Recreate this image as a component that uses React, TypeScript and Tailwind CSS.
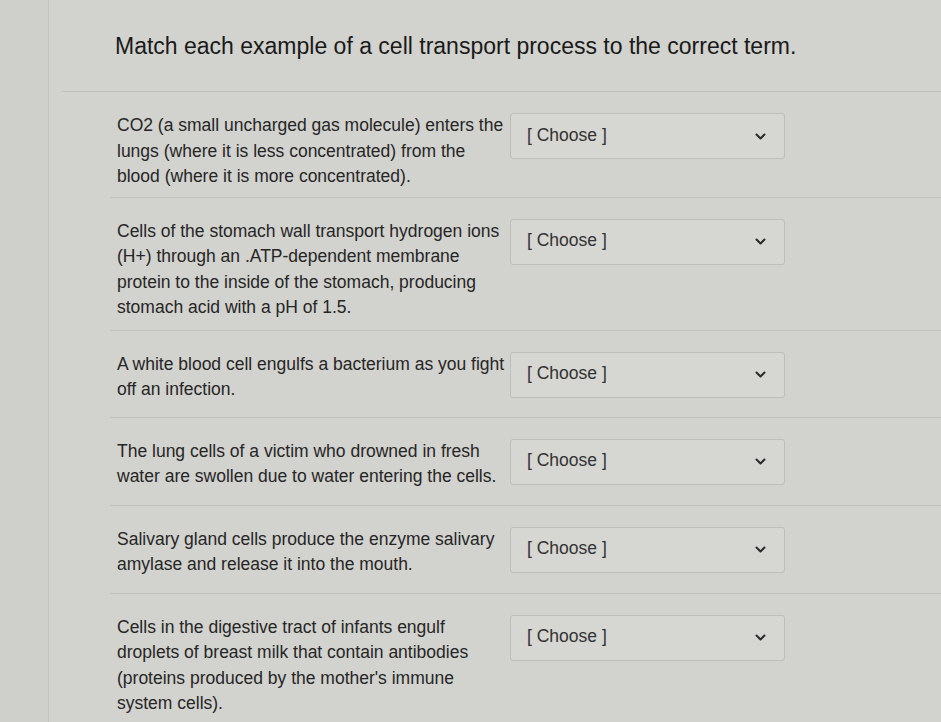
import React from "react";

const items = [
  "CO2 (a small uncharged gas molecule) enters the lungs (where it is less concentrated) from the blood (where it is more concentrated).",
  "Cells of the stomach wall transport hydrogen ions (H+) through an .ATP-dependent membrane protein to the inside of the stomach, producing stomach acid with a pH of 1.5.",
  "A white blood cell engulfs a bacterium as you fight off an infection.",
  "The lung cells of a victim who drowned in fresh water are swollen due to water entering the cells.",
  "Salivary gland cells produce the enzyme salivary amylase and release it into the mouth.",
  "Cells in the digestive tract of infants engulf droplets of breast milk that contain antibodies (proteins produced by the mother's immune system cells).",
];

const rowPad = ["pb-[7px]", "pb-[9px]", "pb-[14px]", "pb-[15px]", "pb-[15px]", "pb-[10px]"];

function Chevron() {
  return (
    <svg width="11" height="7" viewBox="0 0 11 7" className="text-[#2a2a2a]">
      <polyline points="1.5,1.5 5.5,5.5 9.5,1.5" fill="none" stroke="currentColor" strokeWidth="2" strokeLinecap="round" strokeLinejoin="round" />
    </svg>
  );
}

function ChooseSelect() {
  return (
    <div className="w-[275px] h-[46px] shrink-0 flex items-center justify-between pl-[16px] pr-[18px] border border-[#bdbdb9] rounded-[3px] bg-[#d6d6d2]">
      <span className="text-[17.5px] text-[#333] -mt-[2px]">[ Choose ]</span>
      <Chevron />
    </div>
  );
}

export default function App() {
  return (
    <div
      className="w-[941px] h-[722px] overflow-hidden bg-[#d2d2ce] flex text-[#262626]"
      style={{ fontFamily: '"Liberation Sans", Arial, sans-serif' }}
    >
      <div className="w-[49px] shrink-0 border-r border-[#c4c4c0] bg-[#cfcfcb]" />
      <div className="flex-1 pl-[13px]">
        <div className="pt-[32px] pb-[31px] pl-[53px] border-b border-[#c0c0bc]">
          <h1 className="text-[23px] leading-[28px] text-[#1a1a1a]">
            Match each example of a cell transport process to the correct term.
          </h1>
        </div>
        <div className="pl-[48px]">
          {items.map((t, i) => (
            <div
              key={i}
              className={`flex items-start gap-[1px] pl-[7px] pt-[21px] ${rowPad[i]} ${i < items.length - 1 ? "border-b border-[#c0c0bc]" : ""}`}
            >
              <p className="w-[392px] shrink-0 text-[17.5px] leading-[25.5px] text-[#262626]">{t}</p>
              <ChooseSelect />
            </div>
          ))}
        </div>
      </div>
    </div>
  );
}
